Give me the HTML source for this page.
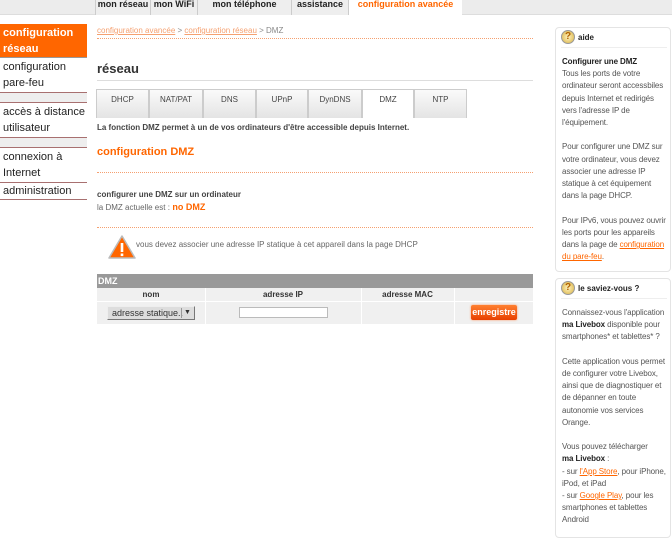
<!DOCTYPE html>
<html><head><meta charset="utf-8"><style>
*{margin:0;padding:0;box-sizing:border-box}
body{width:672px;height:530px;overflow:hidden;background:#fff;font-family:"Liberation Sans",sans-serif;position:relative;color:#333}
.a{position:absolute;white-space:nowrap}
.topbar{position:absolute;left:0;top:0;width:672px;height:15px;background:#ececec;border-bottom:1px solid #ddd}
.tab{position:absolute;top:0;height:15px;font-size:9px;font-weight:bold;color:#222;line-height:9px;white-space:nowrap;text-align:center;border-left:1px solid #ccc;background:#eee;overflow:hidden}
.lnav{position:absolute;left:0;width:87px;font-size:11px;line-height:16px;padding-left:3px;color:#222;white-space:nowrap}
.hr{position:absolute;left:0;width:87px;height:1px;background:#a87070}
.sp{position:absolute;left:0;width:87px;height:9px;background:#eee}
.st{position:absolute;top:89px;height:29px;border:1px solid #ccc;border-bottom:none;background:linear-gradient(#fafafa,#e4e4e4);font-size:8px;color:#444;text-align:center;line-height:20px}
.dot{position:absolute;left:97px;width:436px;border-top:1px dotted #f5a070}
.s8{font-size:8px}
.panel{position:absolute;left:555px;width:116px;border:1px solid #e4e4e4;border-radius:4px;background:#fff}
.q{position:absolute;left:5px;width:14px;height:14px;border-radius:50%;background:radial-gradient(#fff3c0,#d8b040);border:1px solid #999;font-size:10px;font-weight:bold;color:#b06000;text-align:center;line-height:12px}
.pt{font-size:8px;line-height:12.2px;color:#555;position:absolute;left:6px;white-space:nowrap;letter-spacing:-0.1px}
.or{color:#f60;text-decoration:underline}
</style></head><body>
<div class="topbar"></div>
<div class="tab" style="left:95px;width:55px">mon réseau</div>
<div class="tab" style="left:150px;width:47px">mon WiFi</div>
<div class="tab" style="left:197px;width:94px">mon téléphone</div>
<div class="tab" style="left:291px;width:58px;border-right:1px solid #ccc">assistance</div>
<div class="tab" style="left:349px;width:113px;background:#fff;color:#f60;border:none;height:16px">configuration avancée</div>

<div class="lnav" style="top:24px;height:34px;background:#f60;color:#fff;font-weight:bold;padding-top:1px;border-bottom:1px solid #999">configuration<br>réseau</div>
<div class="lnav" style="top:59px">configuration<br>pare-feu</div>
<div class="hr" style="top:92px"></div><div class="sp" style="top:93px"></div><div class="hr" style="top:102px"></div>
<div class="lnav" style="top:104px">accès à distance<br>utilisateur</div>
<div class="hr" style="top:137px"></div><div class="sp" style="top:138px"></div><div class="hr" style="top:147px"></div>
<div class="lnav" style="top:149px">connexion à<br>Internet</div>
<div class="hr" style="top:182px"></div>
<div class="lnav" style="top:183px">administration</div>
<div class="hr" style="top:199px"></div>

<div class="a s8" style="left:97px;top:26px;color:#888"><span style="color:#f5a070;text-decoration:underline">configuration avancée</span> &gt; <span style="color:#f5a070;text-decoration:underline">configuration réseau</span> &gt; DMZ</div>
<div class="dot" style="top:38px"></div>
<div class="a" style="left:97px;top:61px;font-size:13px;font-weight:bold;color:#333">réseau</div>
<div class="a" style="left:97px;top:80px;width:436px;height:1px;background:#ddd"></div>
<div class="st" style="left:96px;width:53px">DHCP</div>
<div class="st" style="left:149px;width:54px">NAT/PAT</div>
<div class="st" style="left:203px;width:53px">DNS</div>
<div class="st" style="left:256px;width:52px">UPnP</div>
<div class="st" style="left:308px;width:54px">DynDNS</div>
<div class="st" style="left:362px;width:52px;background:#fff">DMZ</div>
<div class="st" style="left:414px;width:53px">NTP</div>

<div class="a s8" style="left:97px;top:123px;font-weight:bold;color:#444">La fonction DMZ permet à un de vos ordinateurs d'être accessible depuis Internet.</div>
<div class="a" style="left:97px;top:146px;font-size:11px;font-weight:bold;color:#f60">configuration DMZ</div>
<div class="dot" style="top:172px"></div>
<div class="a s8" style="left:97px;top:190px;font-weight:bold;color:#444">configurer une DMZ sur un ordinateur</div>
<div class="a s8" style="left:97px;top:202px;color:#666">la DMZ actuelle est :<b style="color:#f60;font-size:9px"> no DMZ</b></div>
<div class="dot" style="top:227px"></div>
<svg class="a" style="left:108px;top:235px" width="28" height="25" viewBox="0 0 28 25"><path d="M14 1 L27 23 L1 23 Z" fill="#f60" stroke="#bbb" stroke-width="1.5" stroke-linejoin="round"/><rect x="12.7" y="8" width="2.6" height="9" fill="#fff"/><rect x="12.7" y="18.5" width="2.6" height="2.6" fill="#fff"/></svg>
<div class="a s8" style="left:136px;top:240px;color:#666">vous devez associer une adresse IP statique à cet appareil dans la page DHCP</div>

<div class="a" style="left:97px;top:274px;width:436px;height:14px;background:#999;color:#fff;font-size:9px;font-weight:bold;padding-left:1px;line-height:15px">DMZ</div>
<div class="a" style="left:97px;top:288px;width:436px;height:36px;background:#f0f0f0"></div>
<div class="a" style="left:97px;top:301px;width:436px;height:1px;background:#fff"></div>
<div class="a" style="left:205px;top:288px;width:1px;height:36px;background:#fff"></div>
<div class="a" style="left:361px;top:288px;width:1px;height:36px;background:#fff"></div>
<div class="a" style="left:454px;top:288px;width:1px;height:36px;background:#fff"></div>
<div class="a s8" style="left:97px;top:290px;width:108px;text-align:center;font-weight:bold;color:#333">nom</div>
<div class="a s8" style="left:205px;top:290px;width:156px;text-align:center;font-weight:bold;color:#333">adresse IP</div>
<div class="a s8" style="left:361px;top:290px;width:93px;text-align:center;font-weight:bold;color:#333">adresse MAC</div>
<div class="a" style="left:107px;top:306px;width:88px;height:14px;background:#ddd;border:1px solid #999;border-color:#eee #777 #777 #eee;font-size:9px;color:#333;line-height:12px;padding-left:4px">adresse statique..<span style="position:absolute;right:1px;top:1px;width:12px;height:10px;border-left:1px solid #999;font-size:7px;text-align:center;line-height:10px">▼</span></div>
<div class="a" style="left:239px;top:307px;width:89px;height:11px;background:#fff;border:1px solid #bbb"></div>
<div class="a" style="left:471px;top:305px;width:46px;height:15px;background:linear-gradient(#ff8030,#e84000);border-radius:2px;color:#fff;font-size:9px;font-weight:bold;line-height:15px;text-align:center;overflow:hidden;box-shadow:0 0 2px #f96">enregistre</div>

<div class="panel" style="top:27px;height:245px">
<div class="q" style="top:2px">?</div>
<div class="a" style="left:22px;top:5px;font-size:8px;font-weight:bold;color:#222">aide</div>
<div class="a" style="left:5px;top:19px;width:106px;height:1px;background:#eee"></div>
<div class="pt" style="top:28px"><b style="color:#222">Configurer une DMZ</b><br>Tous les ports de votre<br>ordinateur seront accessbiles<br>depuis Internet et redirigés<br>vers l'adresse IP de<br>l'équipement.<br><br>Pour configurer une DMZ sur<br>votre ordinateur, vous devez<br>associer une adresse IP<br>statique à cet équipement<br>dans la page DHCP.<br><br>Pour IPv6, vous pouvez ouvrir<br>les ports pour les appareils<br>dans la page de <span class="or">configuration</span><br><span class="or">du pare-feu</span>.</div>
</div>
<div class="panel" style="top:278px;height:260px">
<div class="q" style="top:2px">?</div>
<div class="a" style="left:22px;top:5px;font-size:8px;font-weight:bold;color:#222">le saviez-vous ?</div>
<div class="a" style="left:5px;top:19px;width:106px;height:1px;background:#eee"></div>
<div class="pt" style="top:28px">Connaissez-vous l'application<br><b style="color:#222">ma Livebox</b> disponible pour<br>smartphones* et tablettes* ?<br><br>Cette application vous permet<br>de configurer votre Livebox,<br>ainsi que de diagnostiquer et<br>de dépanner en toute<br>autonomie vos services<br>Orange.<br><br>Vous pouvez télécharger<br><b style="color:#222">ma Livebox</b> :<br>- sur <span class="or">l'App Store</span>, pour iPhone,<br>iPod, et iPad<br>- sur <span class="or">Google Play</span>, pour les<br>smartphones et tablettes<br>Android</div>
</div>
</body></html>
